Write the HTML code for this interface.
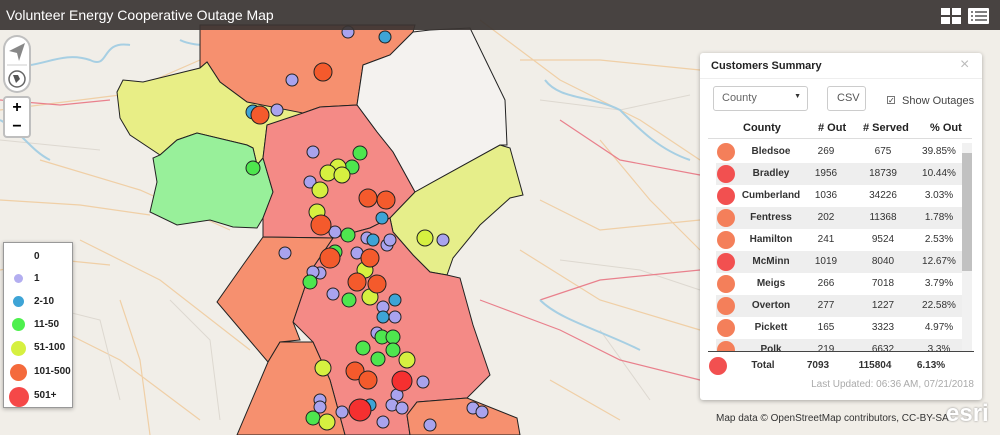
<!DOCTYPE html>
<html><head><meta charset="utf-8"><style>
*{margin:0;padding:0;box-sizing:border-box}
body{width:1000px;height:435px;overflow:hidden;font-family:"Liberation Sans",Arial,sans-serif;background:#f1eee8;position:relative}
#hdr{position:absolute;left:0;top:0;width:1000px;height:30px;background:rgba(58,52,50,.92);color:#fff;font-size:14px;padding:7px 0 0 6px}
.panel{position:absolute;left:700px;top:53px;width:282px;height:347px;background:#fff;box-shadow:0 1px 4px rgba(0,0,0,.3);border-radius:3px;font-size:11px;color:#333}
.abs{position:absolute}
.row{position:absolute;left:8px;width:256px;height:22px}
.c{position:absolute;text-align:center;top:5px}
.dot{position:absolute;left:1px;top:2px;width:18px;height:18px;border-radius:50%}
.ctl{position:absolute;background:#fff;border:2px solid rgba(0,0,0,.25);border-radius:4px}
.leg{position:absolute;left:3px;top:242px;width:70px;height:166px;background:#fff;border:1px solid #999;box-shadow:0 1px 4px rgba(0,0,0,.3);font-size:10px;font-weight:bold;color:#222}
.leg div{position:absolute;left:30px}
.leg span{position:absolute;border-radius:50%}
</style></head><body>
<svg class="abs" style="left:0;top:0" width="1000" height="435">
<g stroke="#f0cfa6" stroke-width="1.2" fill="none">
<path d="M0 110 L120 95 L200 60 M40 160 L140 190 L230 230 M80 240 L160 280 L250 350 M480 20 L560 80 L640 120 L700 160 M520 250 L600 300 L700 330 M550 380 L620 420 M600 140 L650 200 L700 250 M60 330 L120 360 L200 420 M0 270 L60 260 L110 265 M120 300 L140 360 L150 435 M520 60 L600 60 L700 70 M540 200 L600 230 L700 220 M0 200 L80 205 L150 215"/>
</g>
<g stroke="#ddd8d0" stroke-width="1" fill="none"><path d="M0 140 L100 150 M20 300 L100 320 L120 400 M540 100 L620 110 L690 95 M560 260 L640 270 L700 290 M600 330 L650 400 M170 300 L210 340 L220 420"/></g>
<g stroke="#e9808c" stroke-width="1.2" fill="none"><path d="M0 100 L60 105 L110 100 M560 120 L620 160 L700 175 M480 300 L560 330 L620 360 L700 380 M540 300 L600 280 L700 270"/></g>
<g stroke="#a7cfe3" stroke-width="2" fill="none"><path d="M10 65 C40 70 60 50 90 60 C110 70 100 40 130 45 M180 40 C200 50 230 40 250 55 M545 80 C560 100 590 95 620 110 C640 130 660 150 690 160 M540 300 C560 320 600 330 640 350 M0 120 C20 130 30 150 50 160"/></g>
<polygon points="200,25 415,25 413,32 390,55 363,65 357,105 320,107 303,113 267,125 247,102 220,82 207,62 200,68" fill="#f6906f" stroke="#222" stroke-width="1"/>
<polygon points="413,32 430,30 470,28 505,100 507,145 500,145 433,182 415,192 393,152 377,132 357,105 363,65 390,55" fill="#f4f2ef" stroke="#222" stroke-width="1"/>
<polygon points="117,92 123,80 143,82 200,68 207,62 220,82 247,102 303,113 290,125 267,125 263,158 257,165 253,148 247,145 197,133 177,140 160,155 130,135 120,118" fill="#e8ee86" stroke="#222" stroke-width="1"/>
<polygon points="160,155 177,140 197,133 247,145 253,148 257,165 263,158 273,192 263,218 257,228 233,227 210,220 177,225 150,212 157,182 153,158" fill="#98f09a" stroke="#222" stroke-width="1"/>
<polygon points="267,125 303,113 320,107 357,105 377,132 393,152 415,192 390,218 370,228 333,238 263,237 263,218 273,192 263,158" fill="#f48a86" stroke="#222" stroke-width="1"/>
<polygon points="415,192 433,182 500,145 510,148 523,195 510,198 480,225 453,258 447,275 430,272 413,255 393,232 390,218" fill="#e6ee8a" stroke="#222" stroke-width="1"/>
<polygon points="333,238 370,228 390,218 393,232 413,255 430,272 447,275 460,278 473,325 490,375 467,398 417,402 407,415 410,435 345,435 330,380 313,342 293,322 310,272" fill="#f48a86" stroke="#222" stroke-width="1"/>
<polygon points="263,237 333,238 310,272 293,322 300,340 280,342 268,362 217,302 243,265" fill="#f6906f" stroke="#222" stroke-width="1"/>
<polygon points="280,342 313,342 330,380 345,435 237,435 268,362" fill="#f6906f" stroke="#222" stroke-width="1"/>
<polygon points="417,402 467,398 517,418 520,435 410,435 407,415" fill="#f6906f" stroke="#222" stroke-width="1"/>
<g stroke="#222" stroke-width="1">
<g fill="#a9a3ee">
<circle cx="348" cy="32" r="6"/><circle cx="292" cy="80" r="6"/><circle cx="277" cy="110" r="6"/><circle cx="313" cy="152" r="6"/><circle cx="310" cy="182" r="6"/><circle cx="335" cy="232" r="6"/><circle cx="285" cy="253" r="6"/><circle cx="357" cy="253" r="6"/><circle cx="387" cy="245" r="6"/><circle cx="390" cy="240" r="6"/><circle cx="367" cy="238" r="6"/><circle cx="443" cy="240" r="6"/><circle cx="320" cy="273" r="6"/><circle cx="313" cy="272" r="6"/><circle cx="333" cy="294" r="6"/><circle cx="383" cy="307" r="6"/><circle cx="395" cy="317" r="6"/><circle cx="377" cy="333" r="6"/><circle cx="423" cy="382" r="6"/><circle cx="397" cy="395" r="6"/><circle cx="392" cy="405" r="6"/><circle cx="402" cy="408" r="6"/><circle cx="342" cy="412" r="6"/><circle cx="320" cy="400" r="6"/><circle cx="320" cy="407" r="6"/><circle cx="383" cy="422" r="6"/><circle cx="430" cy="425" r="6"/><circle cx="473" cy="408" r="6"/><circle cx="482" cy="412" r="6"/></g>
<g fill="#3ea4d6">
<circle cx="385" cy="37" r="6"/><circle cx="253" cy="112" r="7"/><circle cx="382" cy="218" r="6"/><circle cx="373" cy="240" r="6"/><circle cx="395" cy="300" r="6"/><circle cx="383" cy="317" r="6"/><circle cx="370" cy="405" r="6"/></g>
<g fill="#4ee64e">
<circle cx="360" cy="153" r="7"/><circle cx="352" cy="167" r="7"/><circle cx="253" cy="168" r="7"/><circle cx="348" cy="235" r="7"/><circle cx="335" cy="252" r="7"/><circle cx="310" cy="282" r="7"/><circle cx="349" cy="300" r="7"/><circle cx="363" cy="348" r="7"/><circle cx="382" cy="337" r="7"/><circle cx="393" cy="337" r="7"/><circle cx="393" cy="350" r="7"/><circle cx="378" cy="359" r="7"/><circle cx="313" cy="418" r="7"/></g>
<g fill="#d6f040">
<circle cx="338" cy="167" r="8"/><circle cx="328" cy="173" r="8"/><circle cx="342" cy="175" r="8"/><circle cx="320" cy="190" r="8"/><circle cx="317" cy="212" r="8"/><circle cx="425" cy="238" r="8"/><circle cx="365" cy="270" r="8"/><circle cx="370" cy="297" r="8"/><circle cx="407" cy="360" r="8"/><circle cx="323" cy="368" r="8"/><circle cx="327" cy="422" r="8"/></g>
<g fill="#f45a2c">
<circle cx="323" cy="72" r="9"/><circle cx="260" cy="115" r="9"/><circle cx="368" cy="198" r="9"/><circle cx="386" cy="200" r="9"/><circle cx="321" cy="225" r="10"/><circle cx="330" cy="258" r="10"/><circle cx="370" cy="258" r="9"/><circle cx="357" cy="282" r="9"/><circle cx="377" cy="284" r="9"/><circle cx="355" cy="371" r="9"/><circle cx="368" cy="380" r="9"/></g>
<g fill="#f53030">
<circle cx="402" cy="381" r="10"/><circle cx="360" cy="410" r="11"/></g>
</g>
</svg>
<div id="hdr">Volunteer Energy Cooperative Outage Map</div>
<svg class="abs" style="left:941px;top:8px" width="50" height="18">
<rect x="0" y="0" width="9" height="7" fill="#fff"/><rect x="11" y="0" width="9" height="7" fill="#fff"/><rect x="0" y="9" width="9" height="7" fill="#fff"/><rect x="11" y="9" width="9" height="7" fill="#fff"/>
<rect x="27" y="0" width="21" height="16" fill="#fff" rx="1"/><g stroke="#555" stroke-width="1.4"><path d="M30 4h2M34 4h12M30 8h2M34 8h12M30 12h2M34 12h12"/></g></svg>
<div class="ctl" style="left:3px;top:35px;width:28px;height:58px;border-radius:14px">
<svg width="24" height="54"><path d="M20 6 L4 14 L12 16 L14 24 Z" fill="#888"/><line x1="2" y1="28" x2="22" y2="28" stroke="#ccc"/><circle cx="12" cy="42" r="8" fill="none" stroke="#666" stroke-width="1.5"/><path d="M8 38 l5 0 l2 4 l-4 4 z" fill="#555"/></svg></div>
<div class="ctl" style="left:3px;top:96px;width:28px;height:42px;font-size:16px;font-weight:bold;text-align:center;line-height:19px">+<br>−</div>
<div class="leg">
<div style="top:8px">0</div>
<span style="left:10px;top:31px;width:9px;height:9px;background:#b3aef0"></span><div style="top:30px">1</div>
<span style="left:9px;top:53px;width:11px;height:11px;background:#3ea4d6"></span><div style="top:53px">2-10</div>
<span style="left:8px;top:75px;width:13px;height:13px;background:#4ef04e"></span><div style="top:76px">11-50</div>
<span style="left:7px;top:98px;width:15px;height:15px;background:#d6f040"></span><div style="top:99px">51-100</div>
<span style="left:6px;top:121px;width:17px;height:17px;background:#f46a3c"></span><div style="top:123px">101-500</div>
<span style="left:5px;top:144px;width:20px;height:20px;background:#f54848"></span><div style="top:147px">501+</div>
</div>
<div class="panel">
<div class="abs" style="left:11px;top:7px;font-size:11px;font-weight:bold;color:#222">Customers Summary</div>
<div class="abs" style="left:260px;top:3px;font-size:16px;color:#bbb">×</div>
<div class="abs" style="left:0;top:25px;width:282px;border-top:1px solid #eee"></div>
<div class="abs" style="left:13px;top:33px;width:95px;height:25px;border:1px solid #ccc;border-radius:3px;padding:5px 0 0 8px;color:#666;font-size:11px">County<span style="position:absolute;right:6px;top:6px;font-size:7px;color:#333">▼</span></div>
<div class="abs" style="left:127px;top:33px;width:39px;height:25px;border:1px solid #ccc;border-radius:3px;padding:5px 0 0 9px;color:#555">CSV</div>
<div class="abs" style="left:187px;top:43px;width:8px;height:8px;border:1px solid #777;font-size:8px;line-height:7px">✓</div>
<div class="abs" style="left:202px;top:42px;color:#444">Show Outages</div>
<div class="abs" style="left:8px;top:69px;width:264px;height:17px;font-weight:bold;color:#222;border-bottom:1px solid #ddd">
<span class="abs" style="left:35px">County</span><span class="abs" style="left:110px">#&nbsp;Out</span><span class="abs" style="left:155px">#&nbsp;Served</span><span class="abs" style="left:222px">%&nbsp;Out</span></div>
<div class="abs" style="left:8px;top:88px;width:264px;height:210px;overflow:hidden">
<div style="position:relative;font-size:10px">
<div class="row" style="top:0"><span class="dot" style="background:#f47f5a"></span><span class="c" style="left:20px;width:70px;font-weight:bold">Bledsoe</span><span class="c" style="left:95px;width:30px">269</span><span class="c" style="left:147px;width:40px">675</span><span class="c" style="left:198px;width:50px">39.85%</span></div>
<div class="row" style="top:22px;background:#eee"><span class="dot" style="background:#f25050"></span><span class="c" style="left:20px;width:70px;font-weight:bold">Bradley</span><span class="c" style="left:95px;width:30px">1956</span><span class="c" style="left:147px;width:40px">18739</span><span class="c" style="left:198px;width:50px">10.44%</span></div>
<div class="row" style="top:44px"><span class="dot" style="background:#f25050"></span><span class="c" style="left:20px;width:70px;font-weight:bold">Cumberland</span><span class="c" style="left:95px;width:30px">1036</span><span class="c" style="left:147px;width:40px">34226</span><span class="c" style="left:198px;width:50px">3.03%</span></div>
<div class="row" style="top:66px;background:#eee"><span class="dot" style="background:#f47f5a"></span><span class="c" style="left:20px;width:70px;font-weight:bold">Fentress</span><span class="c" style="left:95px;width:30px">202</span><span class="c" style="left:147px;width:40px">11368</span><span class="c" style="left:198px;width:50px">1.78%</span></div>
<div class="row" style="top:88px"><span class="dot" style="background:#f47f5a"></span><span class="c" style="left:20px;width:70px;font-weight:bold">Hamilton</span><span class="c" style="left:95px;width:30px">241</span><span class="c" style="left:147px;width:40px">9524</span><span class="c" style="left:198px;width:50px">2.53%</span></div>
<div class="row" style="top:110px;background:#eee"><span class="dot" style="background:#f25050"></span><span class="c" style="left:20px;width:70px;font-weight:bold">McMinn</span><span class="c" style="left:95px;width:30px">1019</span><span class="c" style="left:147px;width:40px">8040</span><span class="c" style="left:198px;width:50px">12.67%</span></div>
<div class="row" style="top:132px"><span class="dot" style="background:#f47f5a"></span><span class="c" style="left:20px;width:70px;font-weight:bold">Meigs</span><span class="c" style="left:95px;width:30px">266</span><span class="c" style="left:147px;width:40px">7018</span><span class="c" style="left:198px;width:50px">3.79%</span></div>
<div class="row" style="top:154px;background:#eee"><span class="dot" style="background:#f47f5a"></span><span class="c" style="left:20px;width:70px;font-weight:bold">Overton</span><span class="c" style="left:95px;width:30px">277</span><span class="c" style="left:147px;width:40px">1227</span><span class="c" style="left:198px;width:50px">22.58%</span></div>
<div class="row" style="top:176px"><span class="dot" style="background:#f47f5a"></span><span class="c" style="left:20px;width:70px;font-weight:bold">Pickett</span><span class="c" style="left:95px;width:30px">165</span><span class="c" style="left:147px;width:40px">3323</span><span class="c" style="left:198px;width:50px">4.97%</span></div>
<div class="row" style="top:198px;background:#eee"><span class="dot" style="background:#f47f5a"></span><span class="c" style="left:20px;width:70px;font-weight:bold">Polk</span><span class="c" style="left:95px;width:30px">219</span><span class="c" style="left:147px;width:40px">6632</span><span class="c" style="left:198px;width:50px">3.3%</span></div>
</div></div>
<div class="abs" style="left:262px;top:90px;width:10px;height:208px;background:#f1f1f1"><div style="margin-top:10px;height:118px;background:#c1c1c1"></div></div>
<div class="abs" style="left:8px;top:298px;width:266px;border-top:1.5px solid #444"></div>
<div class="abs" style="left:8px;top:302px;width:264px;height:22px;font-size:10px;font-weight:bold">
<span class="dot" style="background:#f25050"></span><span class="c" style="left:20px;width:70px">Total</span><span class="c" style="left:95px;width:30px">7093</span><span class="c" style="left:147px;width:40px">115804</span><span class="c" style="left:198px;width:50px">6.13%</span></div>
<div class="abs" style="right:8px;top:326px;color:#aaa;font-size:10px">Last Updated: 06:36 AM, 07/21/2018</div>
</div>
<div class="abs" style="left:716px;top:413px;font-size:10px;color:#333">Map data © OpenStreetMap contributors, CC-BY-SA</div>
<div class="abs" style="left:946px;top:400px;font-size:24px;font-weight:bold;color:#fff;text-shadow:0 0 2px #888">esri</div>
</body></html>
